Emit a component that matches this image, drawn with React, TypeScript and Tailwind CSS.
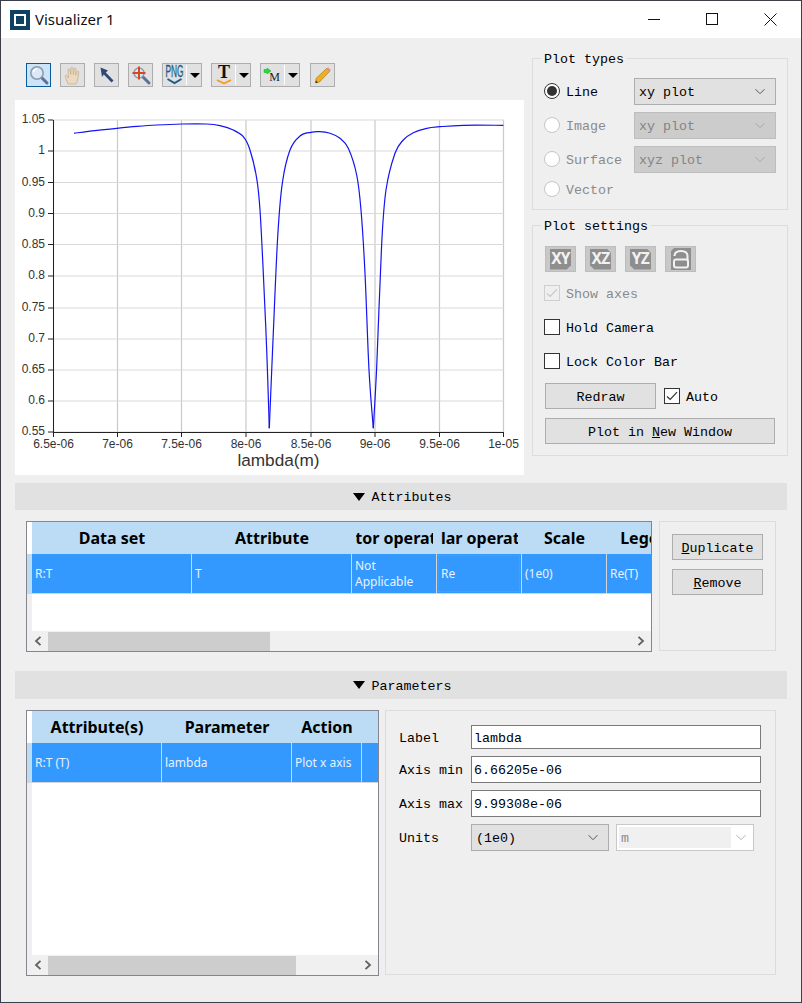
import React from "react";

const mono = "font-['Liberation_Mono',monospace] text-[13.33px] leading-none";
const label = `${mono} pt-[3px]`;
const ui = "font-['Noto_Sans',sans-serif]";

// curve traced from the plot, page coordinates; split at the two dips so the tips stay sharp
const branches: number[][][] = [
  [
    [74, 133.3], [95, 130.6], [116.7, 128.3], [137, 126.4], [156.7, 125], [181.7, 124], [206.7, 124], [220, 125.7],
    [233.3, 130], [243.3, 136.7], [250, 150], [256.7, 178.3], [260, 210], [263.3, 273], [266.7, 350], [269.3, 428.3],
  ],
  [
    [269.3, 428.3], [273.3, 333], [277.7, 236.7], [282.3, 183.3], [290, 150], [300, 136], [311, 132.3], [319.3, 131.7],
    [330, 133.3], [340, 138.3], [348.3, 148.3], [356.7, 175], [361, 210], [365, 273.3], [369, 370], [373.3, 428.3],
  ],
  [
    [373.3, 428.3], [376.7, 366.7], [381.7, 243.3], [386, 190], [395, 153.3], [403.3, 140], [413.3, 132.7],
    [426.7, 128.3], [440, 126.7], [463.3, 125.3], [503.3, 125.3],
  ],
];

function smooth(pts: number[][]) {
  let d = `M${pts[0][0]} ${pts[0][1]}`;
  for (let i = 0; i < pts.length - 1; i++) {
    const p0 = pts[Math.max(i - 1, 0)];
    const p1 = pts[i];
    const p2 = pts[i + 1];
    const p3 = pts[Math.min(i + 2, pts.length - 1)];
    const c1 = [p1[0] + (p2[0] - p0[0]) / 6, p1[1] + (p2[1] - p0[1]) / 6];
    const c2 = [p2[0] - (p3[0] - p1[0]) / 6, p2[1] - (p3[1] - p1[1]) / 6];
    d += `C${c1[0]} ${c1[1]} ${c2[0]} ${c2[1]} ${p2[0]} ${p2[1]}`;
  }
  return d;
}

const xTicks = [
  [53.5, "6.5e-06"],
  [117.5, "7e-06"],
  [181.5, "7.5e-06"],
  [246, "8e-06"],
  [311, "8.5e-06"],
  [375, "9e-06"],
  [439.5, "9.5e-06"],
  [503.5, "1e-05"],
] as const;

const yTicks = [
  [120, "1.05"],
  [151, "1"],
  [182.5, "0.95"],
  [213.5, "0.9"],
  [244.5, "0.85"],
  [276, "0.8"],
  [308, "0.75"],
  [339, "0.7"],
  [370, "0.65"],
  [401, "0.6"],
  [432, "0.55"],
] as const;

function Plot() {
  return (
    <div className="h-[375px] w-[509px] bg-white">
      <svg width="509" height="375" viewBox="15 100 509 375" className="block" fontFamily="'Liberation Sans', sans-serif">
        {xTicks.map(([x]) => (
          <line key={x} x1={x} x2={x} y1="120" y2="432" stroke="#c9c9c9" strokeWidth="1.2" />
        ))}
        {yTicks.map(([y]) => (
          <line key={y} x1="53" x2="504" y1={y} y2={y} stroke="#d9d9d9" strokeWidth="1.2" />
        ))}
        {branches.map((b, i) => (
          <path key={i} d={smooth(b)} fill="none" stroke="#1414f0" strokeWidth="1.2" strokeLinejoin="round" />
        ))}
        <path d="M53.5 120V432.5H504" fill="none" stroke="#222" strokeWidth="1" />
        {xTicks.map(([x, t]) => (
          <g key={t}>
            <line x1={x} x2={x} y1="432" y2="437" stroke="#222" />
            <text x={x} y="448" textAnchor="middle" fontSize="12" fill="#333">
              {t}
            </text>
          </g>
        ))}
        {yTicks.map(([y, t]) => (
          <g key={t}>
            <line x1="48" x2="53" y1={y} y2={y} stroke="#222" />
            <text x="45" y={y + 3} textAnchor="end" fontSize="12" fill="#333">
              {t}
            </text>
          </g>
        ))}
        <text x="278.5" y="466" textAnchor="middle" fontSize="17.2" fill="#333">
          lambda(m)
        </text>
      </svg>
    </div>
  );
}

function ToolButton({ active, children }: { active?: boolean; children: React.ReactNode }) {
  return (
    <div
      className={`flex h-[24px] w-[25px] items-center justify-center border ${
        active ? "border-[#0b5a9e] bg-[#cce4f7]" : "border-[#adadad] bg-[#e1e1e1]"
      }`}
    >
      {children}
    </div>
  );
}

function MenuButton({ children }: { children: React.ReactNode }) {
  return (
    <div className="flex h-[24px] w-[40px] items-center border border-[#adadad] bg-[#e1e1e1]">
      <div className="flex h-full w-[23px] items-center justify-center">{children}</div>
      <div className="h-[20px] w-px bg-white" />
      <div className="ml-[3px] h-0 w-0 border-x-[5px] border-t-[5px] border-x-transparent border-t-black" />
    </div>
  );
}

function Lens({ small }: { small?: boolean }) {
  return (
    <svg width="22" height="22" viewBox="0 0 22 22">
      <path d="M12.5 12.5 19 19" stroke="#5f6f96" strokeWidth="3" strokeLinecap="round" />
      <circle cx="9" cy="9" r={small ? 5 : 6.2} fill="#dbe9f7" stroke="#8d9cb0" strokeWidth="1.6" />
      {small ? <path d="M9 2.5v13M2.5 9h13" stroke="#d9481c" strokeWidth="2" /> : <path d="M5.5 8a3.5 3.5 0 0 1 3.5-3" stroke="#fff" strokeWidth="1.5" fill="none" />}
    </svg>
  );
}

function Toolbar() {
  return (
    <div className="ml-[11px] flex h-[24px] items-center">
      <ToolButton active>
        <Lens />
      </ToolButton>
      <div className="ml-[9px]">
        <ToolButton>
          <svg width="20" height="21" viewBox="0 0 20 21">
            <path
              d="M5 19 2.2 11.5c-.4-1.3 1.200-1.900 1.900-.7L5.500 13 5 4.800c0-1.300 1.800-1.300 2 0L7.800 9.500 8 3.200c0-1.300 2-1.300 2.100 0l.3 6.300.9-5.500c.2-1.200 2-1 1.900.3l-.6 6 1.500-3.500c.5-1 2-.5 1.700.7L14.500 15c-.4 2-.8 3-1.500 4Z"
              fill="#ecd9bf"
              stroke="#c4ae90"
              strokeWidth="0.8"
            />
          </svg>
        </ToolButton>
      </div>
      <div className="ml-[9px]">
        <ToolButton>
          <svg width="20" height="20" viewBox="0 0 20 20">
            <path d="M3.500 2.500 11 5.500 8.800 7.600 16.500 15.500 14.500 17.500 6.800 9.600 5 12Z" fill="#2f4a74" />
          </svg>
        </ToolButton>
      </div>
      <div className="ml-[9px]">
        <ToolButton>
          <Lens small />
        </ToolButton>
      </div>
      <div className="ml-[9px]">
        <MenuButton>
          <svg width="22" height="22" viewBox="0 0 22 22">
            <text x="10.500" y="13" textAnchor="middle" fontSize="16" fontFamily="'Liberation Sans',sans-serif" fill="#1f5d86" stroke="#1f5d86" strokeWidth="0.3" textLength="18" lengthAdjust="spacingAndGlyphs">
              PNG
            </text>
            <path d="M3.500 15 10.500 19l7-4" fill="none" stroke="#1f5d86" strokeWidth="2" />
          </svg>
        </MenuButton>
      </div>
      <div className="ml-[9px]">
        <MenuButton>
          <svg width="22" height="22" viewBox="0 0 22 22">
            <text x="11" y="13.500" textAnchor="middle" fontSize="18" fontWeight="700" fontFamily="'Liberation Serif',serif" fill="#111">
              T
            </text>
            <path d="M4 16 11 19.500 18 16" fill="none" stroke="#f59a1d" strokeWidth="1.800" />
          </svg>
        </MenuButton>
      </div>
      <div className="ml-[9px]">
        <MenuButton>
          <svg width="22" height="22" viewBox="0 0 22 22">
            <path d="M2 5.500h3V4l4 3-4 3V8.500H2Z" fill="#22dd33" stroke="#14a82a" strokeWidth="0.5" />
            <text x="12.500" y="17" textAnchor="middle" fontSize="12" fontFamily="'Liberation Serif',serif" fill="#222">
              M
            </text>
          </svg>
        </MenuButton>
      </div>
      <div className="ml-[10px]">
        <ToolButton>
          <svg width="20" height="20" viewBox="0 0 20 20">
            <path d="M3 13.500 13.500 3.500l3 3L6.500 17 2.500 18Z" fill="#eeb021" stroke="#a97c12" strokeWidth="0.7" />
            <path d="m13.500 3.500 1.500-1.300 3 3-1.500 1.300Z" fill="#e58aa8" />
            <path d="M2.500 18 3 15.500 5 17.500Z" fill="#333" />
          </svg>
        </ToolButton>
      </div>
    </div>
  );
}

function Chevron({ color }: { color: string }) {
  return (
    <svg width="12" height="7" viewBox="0 0 12 7" className="shrink-0">
      <path d="M1.500 1.200 6 5.700l4.500-4.500" fill="none" stroke={color} strokeWidth="1" />
    </svg>
  );
}

function Combo({ text, disabled, w = "w-[142px]" }: { text: string; disabled?: boolean; w?: string }) {
  return (
    <div
      className={`flex h-[27px] items-center justify-between border pl-[4px] pr-[9px] ${w} ${
        disabled ? "border-[#bdbdbd] bg-[#cccccc] text-[#848484]" : "border-[#adadad] bg-[#e1e1e1] text-black"
      }`}
    >
      <span className={label}>{text}</span>
      <Chevron color={disabled ? "#a8a8a8" : "#555"} />
    </div>
  );
}

function Radio({ text, checked }: { text: string; checked?: boolean }) {
  return (
    <div className="flex w-[90px] items-center">
      <div
        className={`flex h-[16px] w-[16px] items-center justify-center rounded-full border bg-white ${
          checked ? "border-[#333]" : "border-[#c6c6c6]"
        }`}
      >
        {checked && <div className="h-[10px] w-[10px] rounded-full bg-[#333]" />}
      </div>
      <span className={`ml-[6px] ${label} ${checked ? "text-black" : "text-[#8a8a8a]"}`}>{text}</span>
    </div>
  );
}

function Check({ text, state }: { text: string; state: "on" | "off" | "disabled" }) {
  return (
    <div className="flex h-[16px] items-center">
      <div
        className={`flex h-[16px] w-[16px] items-center justify-center border ${
          state === "disabled" ? "border-[#cfcfcf] bg-[#efefef]" : "border-[#333] bg-white"
        }`}
      >
        {state !== "off" && (
          <svg width="12" height="10" viewBox="0 0 12 10">
            <path d="M1 5.500 4.200 8.500 11 1.200" fill="none" stroke={state === "on" ? "#333" : "#c8c8c8"} strokeWidth="1.200" />
          </svg>
        )}
      </div>
      <span className={`ml-[6px] ${label} ${state === "disabled" ? "text-[#8a8a8a]" : "text-black"}`}>{text}</span>
    </div>
  );
}

function Button({ w, children }: { w: string; children: React.ReactNode }) {
  return (
    <div className={`flex h-[26px] items-center justify-center border border-[#adadad] bg-[#e1e1e1] text-black ${w}`}>
      <span className={label}>{children}</span>
    </div>
  );
}

function Legend({ text }: { text: string }) {
  return <div className={`-mt-[9px] -ml-[3px] h-[18px] w-fit bg-[#efefef] px-[3px] pt-[3px] text-black ${mono}`}>{text}</div>;
}

function AxisTile({ text, shape }: { text: string; shape: string }) {
  return (
    <div className="flex h-[26px] w-[31px] items-center justify-center border border-[#bdbdbd] bg-[#c8c8c8]">
      <div className={`flex h-[21px] w-[21px] items-center justify-center bg-[#8e8e8e] ${shape}`}>
        <span className={`${ui} text-[15.5px] leading-none font-bold tracking-[-0.7px] text-[#f2f2f2]`}>{text}</span>
      </div>
    </div>
  );
}

function PlotTypes() {
  return (
    <div className="h-[152px] border border-[#dcdcdc] pl-[11px]">
      <Legend text="Plot types" />
      <div className="mt-[10px] flex h-[27px] items-center">
        <Radio text="Line" checked />
        <Combo text="xy plot" />
      </div>
      <div className="mt-[7px] flex h-[27px] items-center">
        <Radio text="Image" />
        <Combo text="xy plot" disabled />
      </div>
      <div className="mt-[7px] flex h-[27px] items-center">
        <Radio text="Surface" />
        <Combo text="xyz plot" disabled />
      </div>
      <div className="mt-[8px] flex h-[16px] items-center">
        <Radio text="Vector" />
      </div>
    </div>
  );
}

function PlotSettings() {
  return (
    <div className="mt-[15px] h-[231px] border border-[#dcdcdc] pl-[11px]">
      <Legend text="Plot settings" />
      <div className="mt-[11px] ml-px flex gap-[9px]">
        <AxisTile text="XY" shape="[clip-path:polygon(0_0,100%_0,100%_80%,80%_100%,0_100%)]" />
        <AxisTile text="XZ" shape="[clip-path:polygon(0_0,80%_0,100%_20%,100%_100%,20%_100%,0_80%)]" />
        <AxisTile text="YZ" shape="[clip-path:polygon(0_0,80%_0,100%_20%,100%_100%,20%_100%,0_80%)]" />
        <div className="flex h-[26px] w-[31px] items-center justify-center border border-[#bdbdbd] bg-[#c8c8c8]">
          <svg width="20" height="22" viewBox="0 0 20 22">
            <path d="M3 0H20V22H0V3Z" fill="#8e8e8e" />
            <path d="M3.500 8C3.500 4 6 3 10 3s6.500 1 6.500 5v4" fill="none" stroke="#f2f2f2" strokeWidth="2" />
            <rect x="3" y="11.500" width="14" height="8" rx="2" fill="none" stroke="#f2f2f2" strokeWidth="2" />
          </svg>
        </div>
      </div>
      <div className="mt-[13px]">
        <Check text="Show axes" state="disabled" />
      </div>
      <div className="mt-[18px]">
        <Check text="Hold Camera" state="off" />
      </div>
      <div className="mt-[18px]">
        <Check text="Lock Color Bar" state="off" />
      </div>
      <div className="mt-[14px] ml-px flex items-center">
        <Button w="w-[111px]">Redraw</Button>
        <div className="ml-[8px]">
          <Check text="Auto" state="on" />
        </div>
      </div>
      <div className="mt-[9px] ml-px">
        <Button w="w-[230px]">
          Plot in <span className="underline">N</span>ew Window
        </Button>
      </div>
    </div>
  );
}

function SectionBar({ text, h }: { text: string; h: string }) {
  return (
    <div className={`flex w-[772px] items-center justify-center bg-[#e1e1e1] pl-[2px] ${h}`}>
      <div className="mr-[7px] h-0 w-0 border-x-[6.5px] border-t-[8px] border-x-transparent border-t-black" />
      <span className={`text-black ${label}`}>{text}</span>
    </div>
  );
}

function ScrollArrow({ dir }: { dir: "l" | "r" }) {
  return (
    <svg width="8" height="10" viewBox="0 0 8 10" className="shrink-0">
      <path d={dir === "l" ? "M6.500 .8 2 5l4.500 4.200" : "M1.500 .8 6 5 1.500 9.200"} fill="none" stroke="#606060" strokeWidth="1.800" />
    </svg>
  );
}

type Col = { title: string; cell: string; w: string; focus?: boolean };

function DataTable({ cols, w, h, thumb }: { cols: Col[]; w: string; h: string; thumb: string }) {
  return (
    <div className={`flex flex-col overflow-hidden border border-[#85858f] bg-white ${w} ${h}`}>
      <div className="flex h-[32px] shrink-0">
        <div className="w-[5px] shrink-0 bg-white" />
        <div className="flex min-w-0 flex-1 overflow-hidden bg-[#bbdcf4]">
          {cols.map((c) => (
            <div key={c.title} className={`shrink-0 px-[4px] ${c.w}`}>
              <div className="flex h-full w-full items-center justify-center overflow-hidden">
                <span className={`${ui} shrink-0 text-[16px] font-bold whitespace-nowrap text-black`}>{c.title}</span>
              </div>
            </div>
          ))}
        </div>
      </div>
      <div className="flex h-[40px] shrink-0 border-b border-[#d5d5d5]">
        <div className="w-[5px] shrink-0 bg-[#bbdcf4]" />
        <div className="flex min-w-0 flex-1 overflow-hidden bg-[#3399ff]">
          {cols.map((c) => (
            <div key={c.title} className={`flex shrink-0 items-center border-r border-[#d5d5d5] ${c.w} ${c.focus ? "p-px" : ""}`}>
              <div className={`flex h-full w-full items-center ${c.focus ? "border border-dotted border-[#c98a45] pl-[2px]" : "pl-[3px]"}`}>
                <span className={`${ui} text-[12px] leading-[16px] text-[#e8f2ff]`}>{c.cell}</span>
              </div>
            </div>
          ))}
        </div>
      </div>
      <div className="flex min-h-0 flex-1">
        <div className="w-[5px] shrink-0 bg-[#efefef]" />
        <div className="flex-1 bg-white" />
      </div>
      <div className="flex h-[20px] shrink-0 items-center bg-[#f0f0f0]">
        <div className="flex h-full w-[21px] shrink-0 items-center justify-center">
          <ScrollArrow dir="l" />
        </div>
        <div className={`h-[19px] shrink-0 bg-[#cdcdcd] ${thumb}`} />
        <div className="flex-1" />
        <div className="flex h-full w-[21px] shrink-0 items-center justify-center">
          <ScrollArrow dir="r" />
        </div>
      </div>
    </div>
  );
}

function Field({ name, value, h }: { name: string; value: string; h: string }) {
  return (
    <div className="flex items-center">
      <span className={`w-[72px] text-black ${label}`}>{name}</span>
      <div className={`flex w-[290px] items-center border border-[#7a7a7a] bg-white pl-[2px] text-black ${h}`}>
        <span className={label}>{value}</span>
      </div>
    </div>
  );
}

export default function App() {
  return (
    <div className="h-[1003px] w-[802px] overflow-hidden border border-[#3c3f4a] bg-[#efefef]">
      {/* title bar */}
      <div className="flex h-[37px] items-center bg-white pl-[9px]">
        <div className="flex h-[20px] w-[20px] items-center justify-center bg-[#0d4262]">
          <div className="h-[12px] w-[12px] border-2 border-white bg-[#0d4262]" />
        </div>
        <span className={`ml-[5px] text-[15px] text-[#111] ${ui}`}>Visualizer 1</span>
        <div className="ml-auto flex h-full items-center">
          <svg width="13" height="13" viewBox="0 0 13 13" className="mr-[45px]">
            <path d="M0 6.500h12" stroke="#111" />
          </svg>
          <svg width="13" height="13" viewBox="0 0 13 13" className="mr-[45px]">
            <rect x="0.500" y="0.500" width="11" height="11" fill="none" stroke="#111" />
          </svg>
          <svg width="13" height="13" viewBox="0 0 13 13" className="mr-[24px]">
            <path d="M.5.500 12.500 12.500M12.500.500.5 12.500" stroke="#111" />
          </svg>
        </div>
      </div>

      <div className="pl-[14px]">
        <div className="flex">
          <div className="w-[509px]">
            <div className="mt-[25px]">
              <Toolbar />
            </div>
            <div className="mt-[13px]">
              <Plot />
            </div>
          </div>
          <div className="mt-[20px] ml-[8px] w-[256px]">
            <PlotTypes />
            <PlotSettings />
          </div>
        </div>

        <div className="mt-[8px]">
          <SectionBar text="Attributes" h="h-[27px]" />
        </div>
        <div className="mt-[11px] ml-[11px] flex">
          <DataTable
            w="w-[626px]"
            h="h-[131px]"
            thumb="w-[222px]"
            cols={[
              { title: "Data set", cell: "R:T", w: "w-[160px]" },
              { title: "Attribute", cell: "T", w: "w-[160px]" },
              { title: "Vector operation", cell: "Not Applicable", w: "w-[85px]" },
              { title: "Scalar operation", cell: "Re", w: "w-[85px]", focus: true },
              { title: "Scale", cell: "(1e0)", w: "w-[85px]" },
              { title: "Legend", cell: "Re(T)", w: "w-[85px]" },
            ]}
          />
          <div className="ml-[7px] h-[130px] w-[117px] border border-[#dcdcdc] pt-[12px] pl-[12px]">
            <Button w="w-[91px]">
              <span className="underline">D</span>uplicate
            </Button>
            <div className="mt-[9px]">
              <Button w="w-[91px]">
                <span className="underline">R</span>emove
              </Button>
            </div>
          </div>
        </div>

        <div className="mt-[19px]">
          <SectionBar text="Parameters" h="h-[28px]" />
        </div>
        <div className="mt-[11px] ml-[11px] flex">
          <DataTable
            w="w-[353px]"
            h="h-[266px]"
            thumb="w-[248px]"
            cols={[
              { title: "Attribute(s)", cell: "R:T (T)", w: "w-[130px]" },
              { title: "Parameter", cell: "lambda", w: "w-[130px]" },
              { title: "Action", cell: "Plot x axis", w: "w-[70px]" },
            ]}
          />
          <div className="ml-[6px] h-[265px] w-[391px] border border-[#dcdcdc] pt-[14px] pl-[13px]">
            <Field name="Label" value="lambda" h="h-[24px]" />
            <div className="mt-[7px]">
              <Field name="Axis min" value="6.66205e-06" h="h-[27px]" />
            </div>
            <div className="mt-[7px]">
              <Field name="Axis max" value="9.99308e-06" h="h-[27px]" />
            </div>
            <div className="mt-[7px] flex items-center">
              <span className={`w-[72px] text-black ${label}`}>Units</span>
              <Combo text="(1e0)" w="w-[138px]" />
              <div className="ml-[7px] flex h-[27px] w-[138px] items-center border border-[#c8c8c8] bg-white p-[2px] text-[#8a8a8a]">
                <div className="flex h-full w-[112px] items-center bg-[#f0f0f0] pl-[2px]">
                  <span className={label}>m</span>
                </div>
                <div className="flex flex-1 justify-center">
                  <Chevron color="#b0b0b0" />
                </div>
              </div>
            </div>
          </div>
        </div>
      </div>
    </div>
  );
}
